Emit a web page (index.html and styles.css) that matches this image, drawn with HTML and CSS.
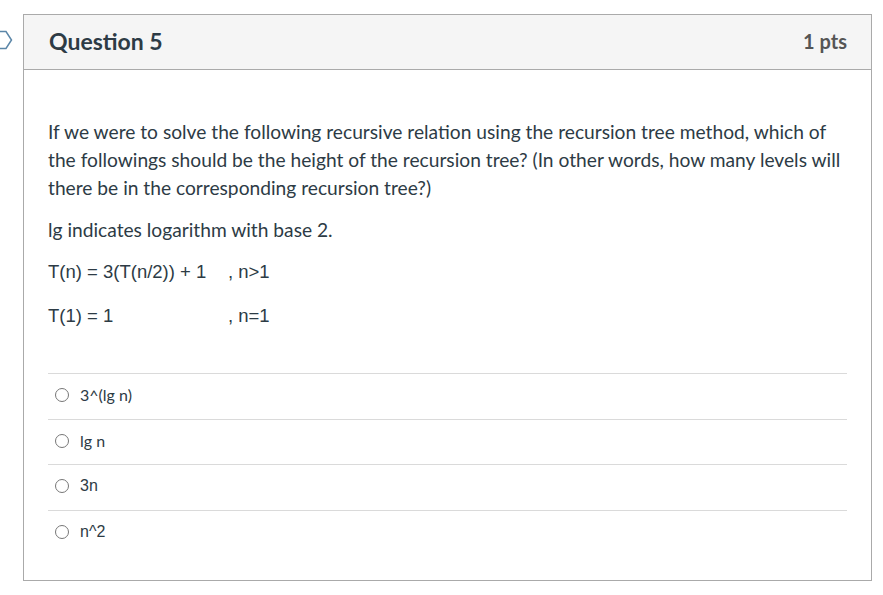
FILE: index.html
```html
<!DOCTYPE html>
<html>
<head>
<meta charset="utf-8">
<link rel="stylesheet" href="styles.css">
</head>
<body>
<div class="page">
  <svg class="flag" width="14" height="20" viewBox="0 0 14 20"><path d="M-4 1.5 H6 L11.5 10 L6 18.5 H-4" fill="none" stroke="#5b86a8" stroke-width="1.5"/></svg>
  <div class="card">
    <div class="header">
      <span class="title">Question 5</span>
      <span class="pts">1 pts</span>
    </div>
    <div class="body">
      <p class="para">If we were to solve the following recursive relation using the recursion tree method, which of the followings should be the height of the recursion tree? (In other words, how many levels will there be in the corresponding recursion tree?)</p>
      <p class="para">lg indicates logarithm with base 2.</p>
      <p class="eq"><span class="lhs">T(n) = 3(T(n/2)) + 1</span><span>, n&gt;1</span></p>
      <p class="eq"><span class="lhs">T(1) = 1</span><span>, n=1</span></p>
      <div class="answers">
        <div class="answer"><span class="radio"></span><span class="lato">3^(lg n)</span></div>
        <div class="answer"><span class="radio"></span><span class="lato">lg n</span></div>
        <div class="answer"><span class="radio"></span><span class="arial">3n</span></div>
        <div class="answer"><span class="radio"></span><span class="arial">n^2</span></div>
      </div>
    </div>
  </div>
</div>
</body>
</html>
```
FILE: styles.css
```css
html, body {
  margin: 0;
  padding: 0;
  background: #fff;
}
body {
  font-family: Lato, "Liberation Sans", sans-serif;
  color: #2d3b45;
}
.page {
  position: relative;
  padding: 14px 11px 0 23px;
}
.flag {
  position: absolute;
  left: 0;
  top: 30px;
}
.card {
  border: 1px solid #aaaaaa;
  height: 567px;
  box-sizing: border-box;
  display: flex;
  flex-direction: column;
}
.header {
  background: #f5f5f5;
  border-bottom: 1px solid #aaaaaa;
  height: 55px;
  box-sizing: border-box;
  display: flex;
  align-items: center;
  justify-content: space-between;
  padding: 0 24px 3px 25px;
}
.title {
  font-weight: 700;
  font-size: 23px;
  color: #2d3b45;
}
.pts {
  font-weight: 700;
  font-size: 20px;
  color: #555;
}
.body {
  padding: 48px 24px 0 24px;
}
.para {
  margin: 0 0 14px 0;
  font-size: 19.2px;
  line-height: 28px;
}
.eq {
  margin: 0 0 16px 0;
  font-family: "Liberation Sans", Arial, sans-serif;
  font-size: 18.5px;
  line-height: 28px;
  display: flex;
}
.lhs {
  width: 180px;
}
.answers {
  margin-top: 43px;
}
.answer {
  border-top: 1px solid #dadada;
  height: 45.7px;
  box-sizing: border-box;
  display: flex;
  align-items: center;
  padding-left: 7px;
  padding-bottom: 3px;
  font-size: 16px;
}
.radio {
  width: 12px;
  height: 12px;
  border: 1px solid #777;
  border-radius: 50%;
  margin-right: 11px;
  flex: none;
}
.lato {
  font-family: Lato, sans-serif;
}
.arial {
  font-family: "Liberation Sans", Arial, sans-serif;
}
```
